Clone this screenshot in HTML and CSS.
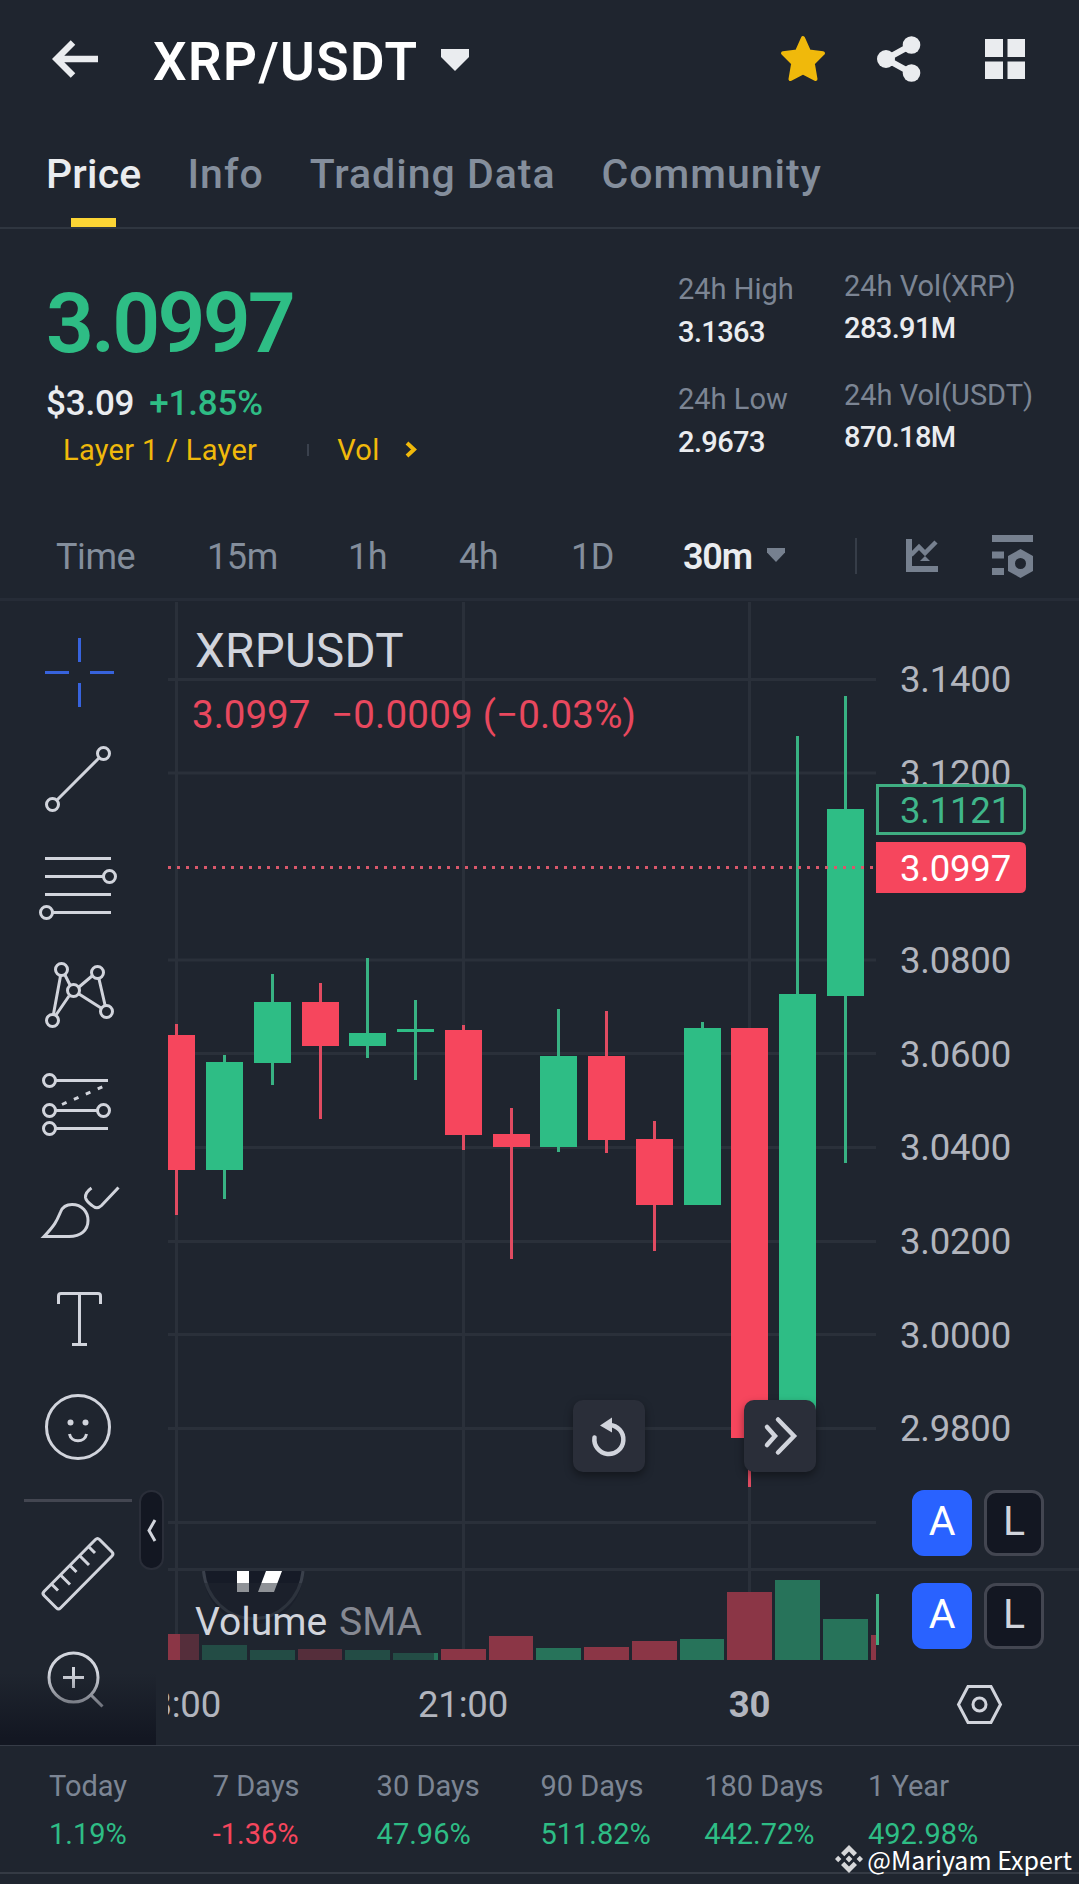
FILE: index.html
```html
<!DOCTYPE html>
<html lang="en">
<head>
    <meta charset="UTF-8">
    <meta name="viewport" content="width=device-width, initial-scale=1.0">
    <title>XRP/USDT</title>
    <link rel="stylesheet" href="styles.css">
</head>
<body>
<header class="header">
    <svg class="back" width="46" height="38" viewBox="0 0 46 38"><path d="M21 2.5L4.5 19 21 35.5M4 19h42" fill="none" stroke="#eaecef" stroke-width="6.4"/></svg>
    <h1>XRP/USDT</h1>
    <svg class="caret" width="28" height="22" viewBox="0 0 28 22"><path d="M0 0h28v8L14 22 0 8z" fill="#eaecef"/></svg>
    <div class="header-icons">
        <svg width="46" height="48" viewBox="0 0 46 48"><path d="M23 3l6 13.5 14 1.7-10.2 10.2L35.5 44 23 37.500 10.500 44l2.700-15.600L3 18.200l14-1.700z" fill="#f0b90b" stroke="#f0b90b" stroke-width="4" stroke-linejoin="round"/></svg>
        <svg width="44" height="46" viewBox="0 0 44 46"><path d="M34.500 9L9 23l25.500 14" fill="none" stroke="#eaecef" stroke-width="6"/><circle cx="34.500" cy="9" r="8.800" fill="#eaecef"/><circle cx="9" cy="23" r="9" fill="#eaecef"/><circle cx="34.500" cy="37" r="8.800" fill="#eaecef"/></svg>
        <svg width="40" height="40" viewBox="0 0 40 40"><path d="M0 0h18v18H0zM22.500 0H40v18H22.500zM0 22.500h18V40H0zM22.500 22.500H40V40H22.500z" fill="#eaecef"/></svg>
    </div>
</header>

<nav class="tabs">
    <a class="tab active">Price</a>
    <a class="tab">Info</a>
    <a class="tab">Trading Data</a>
    <a class="tab">Community</a>
</nav>

<section class="summary">
    <div class="quote">
        <div class="last-price">3.0997</div>
        <div class="change"><span>$3.09</span><span class="up">+1.85%</span></div>
        <div class="tags">
            <span>Layer 1 / Layer</span>
            <i class="tag-divider"></i>
            <span>Vol</span>
            <svg width="12" height="17" viewBox="0 0 12 17"><path d="M2 2l7 6.500-7 6.500" fill="none" stroke="#f0b90b" stroke-width="4"/></svg>
        </div>
    </div>
    <div class="stats">
        <div class="label">24h High</div>
        <div class="value">3.1363</div>
        <div class="label">24h Low</div>
        <div class="value">2.9673</div>
    </div>
    <div class="stats volume">
        <div class="label">24h Vol(XRP)</div>
        <div class="value">283.91M</div>
        <div class="label">24h Vol(USDT)</div>
        <div class="value">870.18M</div>
    </div>
</section>

<section class="intervals">
    <span>Time</span>
    <span>15m</span>
    <span>1h</span>
    <span>4h</span>
    <span>1D</span>
    <span class="selected">30m <svg width="18" height="14" viewBox="0 0 18 14"><path d="M0 0h18v4.500L9 14 0 4.500z" fill="#76808f"/></svg></span>
    <i class="interval-divider"></i>
    <svg class="chart-icon" width="32" height="33" viewBox="0 0 32 33"><path d="M3 0v30h29" fill="none" stroke="#76808f" stroke-width="6"/><path d="M5 16l8-8 6 6L30 3" fill="none" stroke="#76808f" stroke-width="4.500"/><path d="M19 17l5 5H14z" fill="#76808f"/></svg>
    <svg class="settings-icon" width="42" height="43" viewBox="0 0 42 43"><path d="M0 0h41v7H0zM0 16.500h12v7H0zM0 33h12v7H0z" fill="#76808f"/><path fill-rule="evenodd" d="M28.500 14l12.500 7v15l-12.500 7L16 36V21zM28.500 23a5.500 5.500 0 100 11 5.500 5.500 0 000-11z" fill="#76808f"/></svg>
</section>

<main class="chart">
    <aside class="toolbar">
        <!-- cross -->
        <svg class="tool tool-active" viewBox="0 0 168 108"><path d="M79.500 20v24M79.500 65v24M45 54.500h24M90 54.500h24"/></svg>
        <!-- trend line -->
        <svg class="tool" viewBox="0 0 168 108"><path d="M57 74l42-42"/><circle cx="103.500" cy="27.500" r="6"/><circle cx="52.500" cy="78.500" r="6"/></svg>
        <!-- fib retracement -->
        <svg class="tool" viewBox="0 0 168 108"><path d="M45 24.500h66M45 42.500h58M45 60.500h66M53 78.500h58"/><circle cx="109.500" cy="42.500" r="6"/><circle cx="46.500" cy="78.500" r="6"/></svg>
        <!-- patterns -->
        <svg class="tool" viewBox="0 0 168 108"><path d="M60.500 34L53.500 72M65 33l5 10M79 45l13-11M99 37l6 26M79 52l22 14M69 54L56 73"/><circle cx="61.500" cy="27.500" r="6"/><circle cx="97.500" cy="30.500" r="6"/><circle cx="73.500" cy="48.500" r="6"/><circle cx="106.500" cy="69.500" r="6"/><circle cx="52.500" cy="78.500" r="6"/></svg>
        <!-- forecast -->
        <svg class="tool" viewBox="0 0 168 108"><path d="M56 30.500h52M56 60.500h41M56 78.500h52"/><path d="M62 54.500L103 36.500" stroke-dasharray="5 8"/><circle cx="49.500" cy="30.500" r="6"/><circle cx="49.500" cy="60.500" r="6"/><circle cx="103.500" cy="60.500" r="6"/><circle cx="49.500" cy="78.500" r="6"/></svg>
        <!-- brush -->
        <svg class="tool" viewBox="0 0 168 108"><path d="M91.500 30Q85 34.500 85.500 39.500 86 43 92 47.500q5 4.500 9.500 0l17-18M44 78.500C56 66 57 62 60.500 54Q63.500 46.500 72 46.500C82 46.500 88 54 88 62.500 88 72 81 78.500 69 78.500z"/></svg>
        <!-- text -->
        <svg class="tool" viewBox="0 0 168 108"><path d="M58.500 38v-8q0-2.500 2.500-2.500h37q2.500 0 2.500 2.500v8M79.500 28v50M72 78.500h15"/></svg>
        <!-- emoji -->
        <svg class="tool" viewBox="0 0 168 108"><circle cx="78" cy="53" r="31.500"/><circle class="dot" cx="70.500" cy="48.500" r="3"/><circle class="dot" cx="85.500" cy="48.500" r="3"/><path d="M69.500 60c1.500 9 15.500 9 17 0"/></svg>
        <hr>
        <!-- measure -->
        <svg class="tool" viewBox="0 0 168 108"><path d="M95.500 19.500q2-2 4 0l12.500 12.500q2 2 0 4L60.500 88q-2 2-4 0L44 75.500q-2-2 0-4zM89 27l6 6M80 36l9 9M70.500 46l6 6M61 55.500l9 9M52 64.500l6 6"/></svg>
        <!-- zoom in -->
        <svg class="tool" viewBox="0 0 168 108"><circle cx="73.500" cy="49.500" r="24.500"/><path d="M91 67l11.500 11.500M63 49.500h21M73.500 39v21"/></svg>
        <div class="toolbar-fade"></div>
        <div class="toolbar-toggle"><svg width="10" height="23" viewBox="0 0 10 23"><path d="M8 1L2 11.500 8 22" fill="none" stroke="#d1d4dc" stroke-width="3"/></svg></div>
    </aside>

    <div class="plot">
        <svg class="canvas" width="911" height="1143" viewBox="168 602 911 1143">
            <g class="grid">
                <path d="M176.500 602V1660M463.500 602V1660M749.500 602V1660"/>
                <path d="M168 679.500H876M168 773H876M168 960H876M168 1053.500H876M168 1147.500H876M168 1241.500H876M168 1334.500H876M168 1428.500H876M168 1522.500H876"/>
                <path d="M168 1569.500H1079"/>
            </g>

            <g class="red">
                <path class="wick" d="M176.500 1024V1215M320.500 983V1119M463.500 1025V1150M511.500 1108V1259M606.500 1011V1153M654.500 1121V1251M749.500 1400V1487"/>
                <path d="M168 1035h27v135h-27zM302 1002h37v44h-37zM445 1030h37v105h-37zM493 1134h37v13h-37zM588 1056h37v84h-37zM636 1139h37v66h-37zM731 1028h37v410h-37z"/>
            </g>
            <g class="green">
                <path class="wick" d="M224.500 1055V1199M272.500 974V1085M367.500 958V1058M415.500 1000V1080M558.500 1009V1152M702.500 1022V1040M797.500 736V1000M845.500 696V1163"/>
                <path d="M206 1062h37v108h-37zM254 1002h37v61h-37zM349 1033h37v13h-37zM397 1029h37v3h-37zM540 1056h37v91h-37zM684 1028h37v177h-37zM779 994h37v416h-37zM827 809h37v187h-37z"/>
            </g>
            <path class="last-line" d="M168 867.500H876"/>

            <!-- logo cut off by the volume pane -->
            <g>
                <path d="M203 1571a50 53 0 00100.500 0z" fill="#161b27"/>
                <path d="M203.500 1571a50 53 0 0099.500 0" fill="none" stroke="#3a404b" stroke-width="3"/>
                <path d="M237 1571h12v21h-12zM266 1571h16l-8 21h-16z" fill="#fff"/>
            </g>

            <g class="volume-red">
                <path d="M168 1634h31v26h-31zM298 1649h44v11h-44zM441 1649h45v11h-45zM489 1636h44v24h-44zM584 1647h45v13h-45zM632 1641h45v19h-45zM727 1592h45v68h-45zM871 1635h5v25h-5z"/>
            </g>
            <g class="volume-green">
                <path d="M202 1645h45v15h-45zM250 1650h45v10h-45zM345 1650h45v10h-45zM393 1653h45v7h-45zM536 1648h45v12h-45zM680 1639h44v21h-44zM775 1580h45v80h-45zM823 1619h45v41h-45z"/>
            </g>
            <rect class="legend-back" x="180" y="1583" width="254" height="77"/>
            <path d="M877.500 1594v51" stroke="#3fae82" stroke-width="3"/>

            <text class="symbol" x="195" y="667">XRPUSDT</text>
            <text class="ohlc" x="192" y="728">3.0997</text>
            <text class="ohlc" x="331" y="728" textLength="305">−0.0009 (−0.03%)</text>
            <text class="legend" x="195" y="1635">Volume</text>
            <text class="legend muted" x="339" y="1635">SMA</text>

            <g class="axis">
                <text x="900" y="692">3.1400</text>
                <text x="900" y="786">3.1200</text>
                <text x="900" y="973">3.0800</text>
                <text x="900" y="1067">3.0600</text>
                <text x="900" y="1160">3.0400</text>
                <text x="900" y="1254">3.0200</text>
                <text x="900" y="1348">3.0000</text>
                <text x="900" y="1441">2.9800</text>
                <text x="176" y="1717" text-anchor="middle">18:00</text>
                <text x="463" y="1717" text-anchor="middle">21:00</text>
                <text class="bold" x="749.500" y="1717" text-anchor="middle">30</text>
            </g>

            <path d="M877.500 785.500h142q5 0 5 5v38q0 5-5 5h-142z" fill="#1f252f" stroke="#3fae82" stroke-width="3"/>
            <text class="price-tag tag-green" x="900" y="823">3.1121</text>
            <path d="M876 842h144q6 0 6 6v39q0 6-6 6h-144z" fill="#f6465d"/>
            <text class="price-tag" x="900" y="881">3.0997</text>

            <path d="M968 1686.500h23l9.500 18-9.500 18h-23l-9.500-18z" fill="none" stroke="#d1d4dc" stroke-width="3"/>
            <circle cx="979.500" cy="1704.500" r="6.500" fill="none" stroke="#d1d4dc" stroke-width="3"/>
        </svg>

        <button class="float reset"><svg width="72" height="72" viewBox="0 0 72 72"><path d="M21.500 37.500a14.500 14.500 0 1015-12.500" fill="none" stroke="#d1d4dc" stroke-width="4.500" stroke-linecap="round"/><path d="M27 25.500l12-8v15z" fill="#d1d4dc"/></svg></button>
        <button class="float latest"><svg width="72" height="72" viewBox="0 0 72 72"><path d="M23 27l8 9-8 9M34 19.500L50 36 34 52.500" fill="none" stroke="#d1d4dc" stroke-width="4.500" stroke-linecap="round"/></svg></button>

        <div class="scale-buttons">
            <button class="auto">A</button><button>L</button>
            <button class="auto">A</button><button>L</button>
        </div>
    </div>
</main>

<section class="performance">
    <div><span>Today</span><b class="up">1.19%</b></div>
    <div><span>7 Days</span><b class="down">-1.36%</b></div>
    <div><span>30 Days</span><b class="up">47.96%</b></div>
    <div><span>90 Days</span><b class="up">511.82%</b></div>
    <div><span>180 Days</span><b class="up">442.72%</b></div>
    <div><span>1 Year</span><b class="up">492.98%</b></div>
</section>

<div class="watermark">
    <svg width="28" height="28" viewBox="0 0 28 28"><path d="M14 0l8 8-3.300 3.300L14 6.600l-4.700 4.700L6 8zM14 28l-8-8 3.300-3.300 4.700 4.700 4.700-4.700L22 20zM3.200 10.800L6.400 14l-3.200 3.200L0 14zM24.800 10.800L28 14l-3.200 3.200-3.200-3.200zM14 10.600l3.400 3.400-3.400 3.400-3.400-3.400z" fill="#d6d7d9"/></svg>
    <span>@Mariyam Expert</span>
</div>
</body>
</html>
```
FILE: styles.css
```css
* {
    box-sizing: border-box;
}

body {
    position: relative;
    width: 1079px;
    height: 1884px;
    margin: 0;
    overflow: hidden;
    background-color: #1f252f;
    color: #eaecef;
    font-family: Roboto, "Liberation Sans", sans-serif;
}

svg {
    display: block;
    flex: none;
}

.up {
    color: #2ebd85;
}

.down {
    color: #f6465d;
}

/* Header */
.header {
    display: flex;
    align-items: center;
    height: 118px;
    padding: 0 54px 0 52px;
}

.header h1 {
    margin: 5px 0 0 55px;
    font-size: 53px;
    font-weight: 600;
    letter-spacing: 1.4px;
    line-height: 60px;
    color: #fff;
}

.caret {
    margin: 2px 0 0 23px;
}

.header-icons {
    display: flex;
    align-items: center;
    margin-left: auto;
}

.header-icons svg:nth-child(2) {
    margin: 0 64px 0 51px;
}

/* Tabs */
.tabs {
    display: flex;
    gap: 46px;
    height: 111px;
    padding-left: 46px;
    border-bottom: 2px solid #2f3640;
}

.tab {
    position: relative;
    font-size: 41px;
    font-weight: 500;
    letter-spacing: 1px;
    line-height: 113px;
    color: #848e9c;
}

.tab.active {
    color: #eaecef;
    letter-spacing: 0.2px;
}

.tab.active::after {
    content: "";
    position: absolute;
    left: 25px;
    top: 100px;
    width: 45px;
    height: 9px;
    background-color: #fcd535;
}

/* Summary */
.summary {
    display: flex;
    height: 283px;
    padding-left: 46px;
}

.quote {
    width: 632px;
    padding-top: 45px;
}

.last-price {
    font-size: 84px;
    font-weight: 600;
    letter-spacing: -2.8px;
    line-height: 100px;
    color: #2ebd85;
}

.change {
    display: flex;
    gap: 15px;
    margin-top: 5px;
    font-size: 35px;
    font-weight: 500;
    letter-spacing: -0.2px;
    line-height: 50px;
}

.tags {
    display: flex;
    align-items: center;
    padding-left: 17px;
    font-size: 29px;
    letter-spacing: 0.3px;
    line-height: 42px;
    color: #f0b90b;
}

.tag-divider {
    width: 2px;
    height: 12px;
    margin: 0 28px 0 50px;
    background-color: #3a414d;
}

.tags svg {
    margin: -2px 0 0 25px;
}

.stats {
    width: 166px;
    padding-top: 39px;
    font-size: 29px;
    line-height: 43px;
    white-space: nowrap;
}

.stats.volume {
    padding-top: 36px;
}

.stats .label {
    color: #7c8594;
}

.stats .value {
    margin-bottom: 24px;
    font-weight: 500;
    letter-spacing: -0.6px;
}

.stats.volume .value {
    margin-top: -1px;
}

/* Intervals */
.intervals {
    display: grid;
    grid-template-columns: 151px 141px 111px 112px 112px 172px 51px 86px 42px;
    align-items: center;
    height: 86px;
    padding-left: 56px;
    font-size: 36px;
    letter-spacing: -0.4px;
    line-height: 90px;
    color: #848e9c;
}

.intervals .selected {
    display: flex;
    align-items: center;
    gap: 15px;
    color: #eaecef;
    font-weight: 600;
    letter-spacing: -1.2px;
}

.intervals .selected svg {
    margin-bottom: 5px;
}

.interval-divider {
    width: 2px;
    height: 36px;
    margin-bottom: 2px;
    background-color: #363d48;
}

.chart-icon {
    margin-bottom: 4px;
}

.settings-icon {
    margin-bottom: 2px;
}

/* Chart */
.chart {
    display: flex;
    height: 1148px;
    border-top: 3px solid #262c37;
    border-bottom: 1px solid #363c47;
}

.toolbar {
    position: relative;
    width: 168px;
    padding-top: 17px;
}

.tool {
    width: 168px;
    height: 108px;
    fill: none;
    stroke: #d1d4dc;
    stroke-width: 3;
}

.tool-active {
    stroke: #3763dd;
}

.tool .dot {
    fill: #d1d4dc;
    stroke: none;
}

.toolbar hr {
    width: 108px;
    height: 3px;
    margin: 17px 0 18px 24px;
    border: none;
    background-color: #434651;
}

.toolbar-fade {
    position: absolute;
    left: 0;
    bottom: 0;
    width: 156px;
    height: 72px;
    background: linear-gradient(rgba(19, 23, 34, 0), #131722 90%);
}

.toolbar-toggle {
    position: absolute;
    left: 139px;
    top: 889px;
    display: flex;
    align-items: center;
    justify-content: center;
    width: 25px;
    height: 80px;
    border: 2px solid #2a2e39;
    border-radius: 12px;
    background-color: #131722;
}

.plot {
    position: relative;
    width: 911px;
}

.canvas {
    margin-top: 1px;
}

.grid path {
    fill: none;
    stroke: #2a303a;
    stroke-width: 3;
}

.wick {
    stroke-width: 3;
}

.red {
    fill: #f6465d;
    stroke: none;
}

.red .wick {
    stroke: #e04b61;
}

.green {
    fill: #2ebd85;
    stroke: none;
}

.green .wick {
    stroke: #38b283;
}

.last-line {
    stroke: #d9586b;
    stroke-width: 3;
    stroke-dasharray: 3 6;
}

.volume-red {
    fill: #8b3646;
}

.volume-green {
    fill: #27735a;
}

.legend-back {
    fill: #1f252f;
    fill-opacity: 0.5;
}

.symbol {
    font-size: 47.500px;
    letter-spacing: 0.3px;
    fill: #d1d4dc;
}

.ohlc {
    font-size: 38.500px;
    fill: #e8485e;
}

.legend {
    font-size: 39px;
    fill: #d1d4dc;
}

.muted {
    fill: #868993;
}

.axis text,
.price-tag {
    font-size: 36.500px;
    letter-spacing: -0.2px;
    fill: #b2b5be;
}

.axis .bold {
    font-weight: 700;
}

.price-tag {
    fill: #fff;
}

.tag-green {
    fill: #3fb68a;
}

.float {
    position: absolute;
    top: 799px;
    width: 72px;
    height: 72px;
    padding: 0;
    border: none;
    border-radius: 10px;
    background-color: #2a2e39;
    box-shadow: 0 4px 8px rgba(0, 0, 0, 0.4);
}

.reset {
    left: 405px;
}

.latest {
    left: 576px;
}

.scale-buttons {
    position: absolute;
    left: 744px;
    top: 889px;
    display: grid;
    grid-template-columns: 60px 60px;
    gap: 27px 12px;
}

.scale-buttons button {
    height: 66px;
    padding: 0 0 4px;
    border: 3px solid #434651;
    border-radius: 12px;
    background-color: #131722;
    color: #d1d4dc;
    font-family: inherit;
    font-size: 41px;
    line-height: 56px;
}

.scale-buttons .auto {
    border-color: #2962ff;
    background-color: #2962ff;
    color: #fff;
}

/* Performance */
.performance {
    display: grid;
    grid-template-columns: repeat(6, 163.800px);
    height: 128px;
    padding: 16px 0 0 49px;
    border-bottom: 2px solid #343a44;
    font-size: 29px;
}

.performance span,
.performance b {
    display: block;
    font-weight: 400;
    line-height: 48px;
}

.performance span {
    color: #7c8594;
}

.watermark {
    position: absolute;
    right: 7px;
    bottom: 9px;
    display: flex;
    align-items: center;
    gap: 4px;
    color: #fff;
    font-family: "Noto Sans CJK SC", "Noto Sans", sans-serif;
    font-size: 25px;
    line-height: 32px;
}
```
